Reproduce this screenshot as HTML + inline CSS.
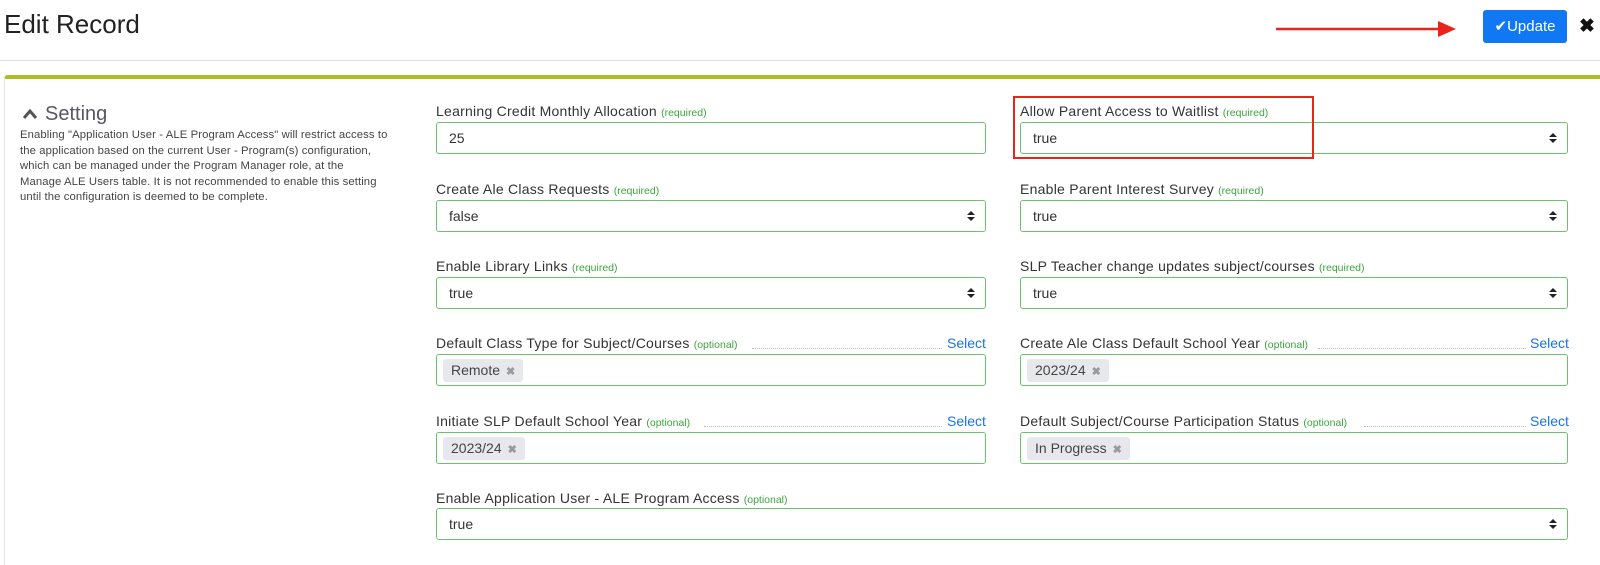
<!DOCTYPE html>
<html><head><meta charset="utf-8"><style>
*{box-sizing:border-box;margin:0;padding:0}
body{width:1600px;height:554px;background:#fff;font-family:"Liberation Sans",sans-serif;color:#333;position:relative;overflow:hidden}
.abs{position:absolute}
.title{left:4px;top:9px;font-size:26px;color:#222}
.hline{left:0;top:60px;width:1600px;height:1px;background:#dde0e4}
.panel{left:4px;top:75px;width:1600px;height:490px;border-top:4px solid #afbd22;border-left:1px solid #e3e3e3;border-radius:4px 0 0 0}
.lbl{font-size:14px;letter-spacing:0.25px;color:#333;white-space:nowrap;line-height:16px}
.lbl small{font-size:10.5px;letter-spacing:0;color:#3ca53c}
.inp{height:32px;border:1px solid #6cc16c;border-radius:3px;font-size:14px;color:#333;padding-left:12px;line-height:30px}
.arr{position:absolute;right:10px;top:9px;width:8px;height:12px}
.sel{color:#1a73e8;font-size:14px}
.dots{border-bottom:1px dotted #bbb;height:1px}
.tag{display:inline-block;background:#e6e8eb;border-radius:3px;height:23px;line-height:23px;padding:0 8px;margin-top:3px;margin-left:-6px;font-size:14px;color:#444}
.tag b{color:#9a9a9a;font-size:11px;margin-left:6px}
</style></head><body>
<div class="abs title">Edit Record</div>
<div class="abs hline"></div>
<svg class="abs" style="left:1270px;top:20px" width="190" height="20"><line x1="6" y1="9" x2="170" y2="9" stroke="#e8241c" stroke-width="2.5"/><polygon points="168,1 186,9 168,17" fill="#e8241c"/></svg>
<div class="abs" style="left:1483px;top:10px;width:84px;height:33px;background:#1077f5;border-radius:3px;color:#fff;font-size:15px;line-height:33px;text-align:center">✔Update</div>
<div class="abs" style="left:1579px;top:15px;font-size:19px;font-weight:bold;color:#111">✖</div>
<div class="abs panel"></div>
<svg class="abs" style="left:22px;top:108px" width="16" height="12"><polyline points="2,10 8,3 14,10" fill="none" stroke="#555" stroke-width="3"/></svg>
<div class="abs" style="left:45px;top:103px;font-size:20px;color:#556">Setting</div>
<div class="abs" style="left:20px;top:128px;white-space:nowrap;font-size:11.3px;letter-spacing:0.1px;line-height:15.6px;color:#444">Enabling "Application User - ALE Program Access" will restrict access to<br>the application based on the current User - Program(s) configuration,<br>which can be managed under the Program Manager role, at the<br>Manage ALE Users table. It is not recommended to enable this setting<br>until the configuration is deemed to be complete.</div>

<div class="abs lbl" style="left:436px;top:103px">Learning Credit Monthly Allocation <small>(required)</small></div>
<div class="abs inp" style="left:436px;top:122px;width:550px">25</div>
<div class="abs lbl" style="left:1020px;top:103px">Allow Parent Access to Waitlist <small>(required)</small></div>
<div class="abs inp" style="left:1020px;top:122px;width:548px">true<svg class="arr" viewBox="0 0 8 12"><path d="M0 5L4 1L8 5ZM0 7L4 11L8 7Z" fill="#222"/></svg></div>
<div class="abs" style="left:1013px;top:96px;width:301px;height:63px;border:2.5px solid #e8241c"></div>

<div class="abs lbl" style="left:436px;top:181px">Create Ale Class Requests <small>(required)</small></div>
<div class="abs inp" style="left:436px;top:200px;width:550px">false<svg class="arr" viewBox="0 0 8 12"><path d="M0 5L4 1L8 5ZM0 7L4 11L8 7Z" fill="#222"/></svg></div>
<div class="abs lbl" style="left:1020px;top:181px">Enable Parent Interest Survey <small>(required)</small></div>
<div class="abs inp" style="left:1020px;top:200px;width:548px">true<svg class="arr" viewBox="0 0 8 12"><path d="M0 5L4 1L8 5ZM0 7L4 11L8 7Z" fill="#222"/></svg></div>

<div class="abs lbl" style="left:436px;top:258px">Enable Library Links <small>(required)</small></div>
<div class="abs inp" style="left:436px;top:277px;width:550px">true<svg class="arr" viewBox="0 0 8 12"><path d="M0 5L4 1L8 5ZM0 7L4 11L8 7Z" fill="#222"/></svg></div>
<div class="abs lbl" style="left:1020px;top:258px">SLP Teacher change updates subject/courses <small>(required)</small></div>
<div class="abs inp" style="left:1020px;top:277px;width:548px">true<svg class="arr" viewBox="0 0 8 12"><path d="M0 5L4 1L8 5ZM0 7L4 11L8 7Z" fill="#222"/></svg></div>

<div class="abs lbl" style="left:436px;top:335px">Default Class Type for Subject/Courses <small>(optional)</small></div>
<div class="abs dots" style="left:752px;top:348px;width:190px"></div>
<div class="abs sel" style="left:947px;top:335px">Select</div>
<div class="abs inp" style="left:436px;top:354px;width:550px"><span class="tag">Remote<b>✖</b></span></div>
<div class="abs lbl" style="left:1020px;top:335px">Create Ale Class Default School Year <small>(optional)</small></div>
<div class="abs dots" style="left:1318px;top:348px;width:208px"></div>
<div class="abs sel" style="left:1530px;top:335px">Select</div>
<div class="abs inp" style="left:1020px;top:354px;width:548px"><span class="tag">2023/24<b>✖</b></span></div>

<div class="abs lbl" style="left:436px;top:413px">Initiate SLP Default School Year <small>(optional)</small></div>
<div class="abs dots" style="left:704px;top:426px;width:238px"></div>
<div class="abs sel" style="left:947px;top:413px">Select</div>
<div class="abs inp" style="left:436px;top:432px;width:550px"><span class="tag">2023/24<b>✖</b></span></div>
<div class="abs lbl" style="left:1020px;top:413px">Default Subject/Course Participation Status <small>(optional)</small></div>
<div class="abs dots" style="left:1364px;top:426px;width:162px"></div>
<div class="abs sel" style="left:1530px;top:413px">Select</div>
<div class="abs inp" style="left:1020px;top:432px;width:548px"><span class="tag">In Progress<b>✖</b></span></div>

<div class="abs lbl" style="left:436px;top:490px">Enable Application User - ALE Program Access <small>(optional)</small></div>
<div class="abs inp" style="left:436px;top:508px;width:1132px">true<svg class="arr" viewBox="0 0 8 12"><path d="M0 5L4 1L8 5ZM0 7L4 11L8 7Z" fill="#222"/></svg></div>
</body></html>
